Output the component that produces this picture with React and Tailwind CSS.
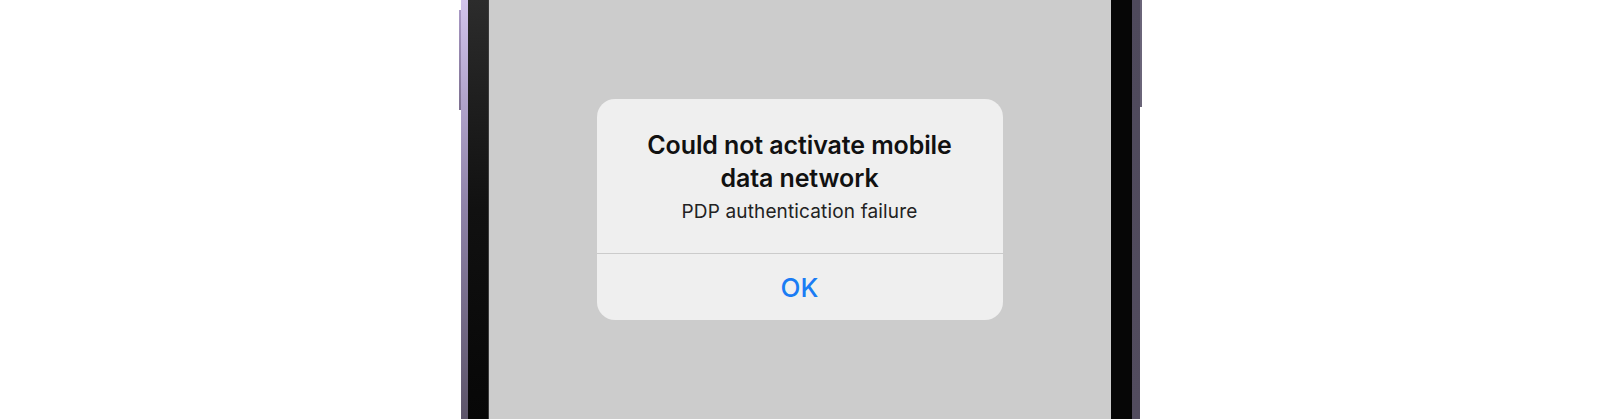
import React from 'react';

export default function App() {
  return (
    <div className="w-[1600px] h-[419px] bg-white overflow-hidden flex justify-center" style={{ fontFamily: 'Inter, "Noto Sans", sans-serif' }}>
      {/* phone frame */}
      <div className="flex h-[419px]">
        {/* left edge with side button */}
        <div className="w-[2px] h-[100px] mt-[10px] bg-gradient-to-b from-[#a898c4] to-[#7d7090]" />
        <div className="w-[7px] bg-gradient-to-b from-[#d2c4ec] via-[#8e82a8] to-[#5c5469]" />
        <div className="w-[21px] bg-gradient-to-b from-[#2c2c2c] via-[#111111] to-[#070707] border-r border-[#3a3a3a]" />

        {/* screen */}
        <div className="w-[622px] bg-[#cccccc] flex justify-center">
          <div className="mt-[99px] w-[406px] h-[221px] bg-[#efefef] rounded-[18px] flex flex-col">
            <div className="pt-[30px] pb-[29px] px-6 flex flex-col items-center text-center">
              <h1 className="text-[25px] leading-[33px] font-semibold text-[#111111] tracking-[-0.1px]">
                Could not activate mobile<br />data network
              </h1>
              <p className="mt-[5px] text-[19px] leading-[24px] text-[#222222] tracking-[0.15px]">PDP authentication failure</p>
            </div>
            <div className="h-px bg-[#cbcbcb]" />
            <button className="flex-1 flex items-center justify-center text-[26px] leading-[33px] font-medium text-[#1a7cf4]">
              OK
            </button>
          </div>
        </div>

        {/* right edge with side button */}
        <div className="w-[21px] bg-[#060606]" />
        <div className="w-[8px] bg-gradient-to-b from-[#4e495b] to-[#524c5e]" />
        <div className="w-[2px] h-[107px] bg-[#6a6478]" />
      </div>
    </div>
  );
}
